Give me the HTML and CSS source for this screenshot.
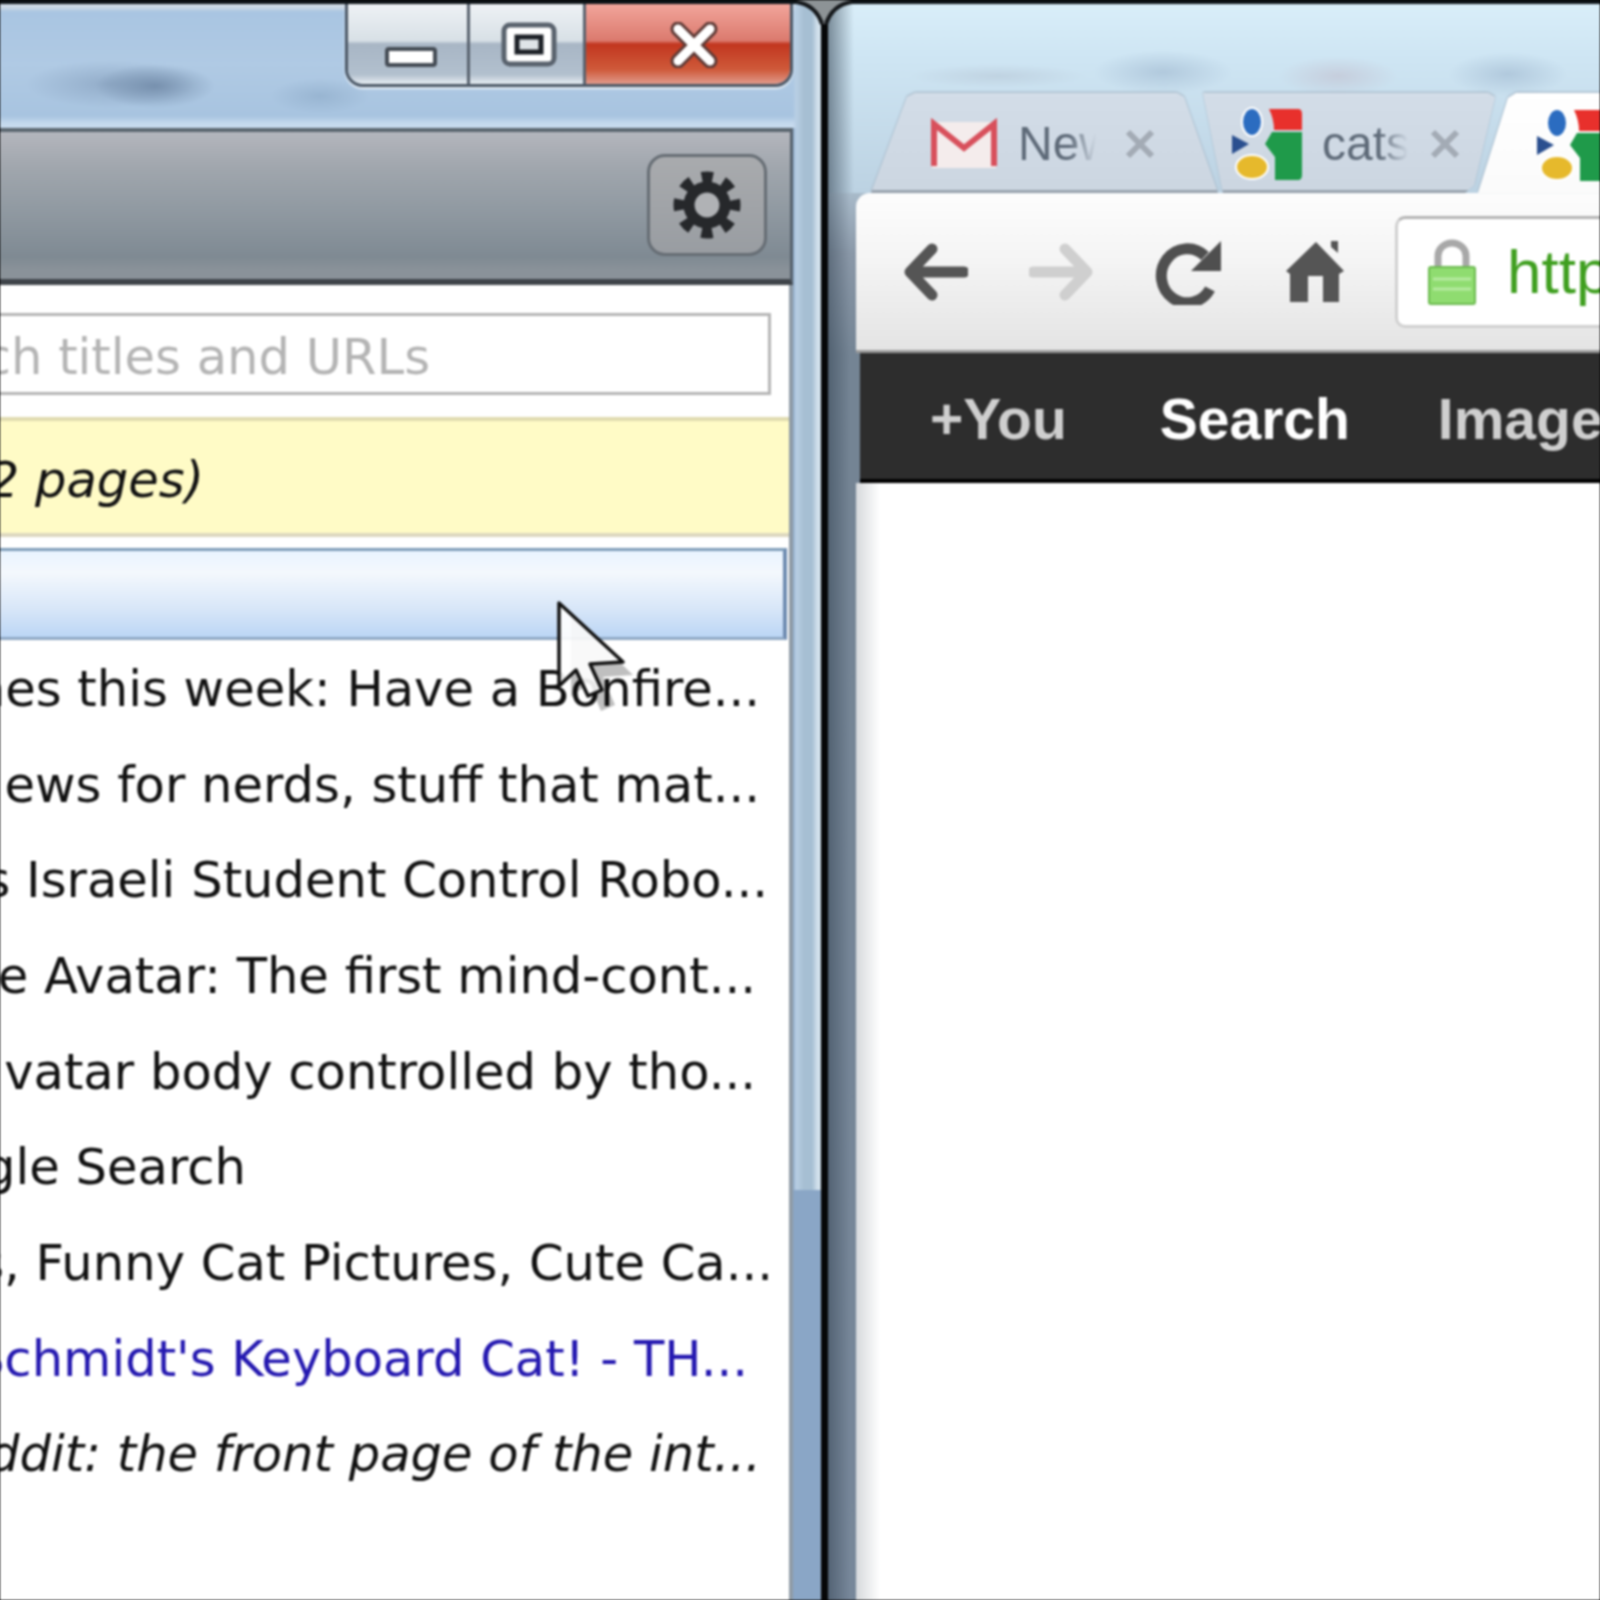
FILE: index.html
```html
<!DOCTYPE html>
<html lang="en">
<head>
<meta charset="utf-8">
<title>Tabs and browser</title>
<link rel="stylesheet" href="styles.css">
</head>
<body>
<div class="screen">
  <section class="left">
    <div class="titlebar">
      <div class="winbtns">
        <div class="wb wb-min"><svg width="60" height="30" viewBox="0 0 60 30"><rect x="6" y="7" width="48" height="16" rx="2" fill="#fff" stroke="#454c55" stroke-width="4"/></svg></div>
        <div class="wb wb-max"><svg width="60" height="46" viewBox="0 0 60 46"><rect x="5" y="3" width="50" height="39" rx="6" fill="#fff" stroke="#59626d" stroke-width="5"/><rect x="18" y="15" width="24" height="15" fill="#dfe4e8" stroke="#1c2026" stroke-width="5"/></svg></div>
        <div class="wb wb-close"><svg width="54" height="46" viewBox="0 0 54 46"><path d="M11 7 L43 39 M43 7 L11 39" stroke="#5e3a36" stroke-width="15" stroke-linecap="round"/><path d="M11 7 L43 39 M43 7 L11 39" stroke="#fff" stroke-width="9" stroke-linecap="round"/></svg></div>
      </div>
    </div>
    <div class="panel">
      <header class="panel-head">
        <button class="gear-btn" type="button" aria-label="Settings">
          <svg width="72" height="70" viewBox="0 0 72 70">
            <circle cx="36" cy="35" r="28" fill="none" stroke="#26282b" stroke-width="11" stroke-dasharray="11 11" stroke-dashoffset="5.5"/>
            <circle cx="36" cy="35" r="18" fill="none" stroke="#26282b" stroke-width="11"/>
            <circle cx="36" cy="35" r="12" fill="#b0b2b5"/>
          </svg>
        </button>
      </header>
      <div class="search-wrap"><div class="search"><span>Search titles and URLs</span></div></div>
      <div class="notice"><em>(2 pages)</em></div>
      <div class="selected"></div>
      <ul class="rows">
        <li class="row r1"><span>nes this week: Have a Bonfire...</span></li>
        <li class="row r2"><span>News for nerds, stuff that mat...</span></li>
        <li class="row r3"><span>This Israeli Student Control Robo...</span></li>
        <li class="row r4"><span>Life Avatar: The first mind-cont...</span></li>
        <li class="row r5"><span>avatar body controlled by tho...</span></li>
        <li class="row r6"><span>Google Search</span></li>
        <li class="row r7"><span>Cats, Funny Cat Pictures, Cute Ca...</span></li>
        <li class="row r8"><span>Schmidt's Keyboard Cat! - TH...</span></li>
        <li class="row r9"><span>reddit: the front page of the int...</span></li>
      </ul>
    </div>
  </section>
  <div class="sep"></div>
  <section class="chrome">
    <div class="tabstrip">
      <div class="tabs">
        <div class="tab tab1">
          <svg class="fav" width="72" height="52" viewBox="0 0 72 52"><rect x="4" y="4" width="64" height="46" fill="#f4ecec"/><path d="M6 48 V6 L36 30 L66 6 V48" fill="none" stroke="#d8505c" stroke-width="6"/></svg>
          <span class="tab-title t1">New</span>
          <svg class="tab-x x1" width="34" height="34" viewBox="0 0 34 34"><path d="M5 5 L29 29 M29 5 L5 29" stroke="#a3abb5" stroke-width="6"/></svg>
        </div>
        <div class="tab tab2">
          <svg class="fav" width="72" height="74" viewBox="0 0 72 74"><use href="#gbm"/></svg>
          <span class="tab-title t2">cats</span>
          <svg class="tab-x x2" width="34" height="34" viewBox="0 0 34 34"><path d="M5 5 L29 29 M29 5 L5 29" stroke="#a3abb5" stroke-width="6"/></svg>
        </div>
        <div class="tab tab3">
          <svg class="fav" width="72" height="74" viewBox="0 0 72 74"><use href="#gbm"/></svg>
        </div>
      </div>
    </div>
    <div class="toolbar">
      <svg class="tool t-back" width="66" height="58" viewBox="0 0 66 58"><path d="M30 6 L8 29 L30 52 M10 29 H62" fill="none" stroke="#555" stroke-width="11" stroke-linejoin="round" stroke-linecap="round"/></svg>
      <svg class="tool t-fwd" width="66" height="58" viewBox="0 0 66 58"><path d="M36 6 L58 29 L36 52 M4 29 H56" fill="none" stroke="#cfcfcf" stroke-width="11" stroke-linejoin="round" stroke-linecap="round"/></svg>
      <svg class="tool t-reload" width="68" height="66" viewBox="0 0 68 66"><path d="M50 17 A26 27 0 1 0 55 50" fill="none" stroke="#4f4f4f" stroke-width="11"/><path d="M66 2 V32 H36 Z" fill="#4f4f4f"/></svg>
      <svg class="tool t-home" width="60" height="66" viewBox="0 0 60 66"><path d="M31 3 L59 32 L54 35 V63 H38 V37 H23 V63 H5 V35 L1 32 Z M46 2 H53 V14 L46 8 Z" fill="#555"/></svg>
      <div class="omnibox">
        <svg class="lock" width="50" height="66" viewBox="0 0 50 66"><path d="M11 30 V17 A14 13 0 0 1 39 17 V30" fill="none" stroke="#a8a8a8" stroke-width="7"/><rect x="2" y="28" width="46" height="37" rx="2" fill="#8fdc70" stroke="#6cba50" stroke-width="2"/><path d="M6 40 H44 M6 50 H44" stroke="#b6eaa0" stroke-width="3"/></svg>
        <span class="url">https://</span>
      </div>
    </div>
    <nav class="gbar">
      <span class="g-dim">+You</span>
      <span class="g-on">Search</span>
      <span class="g-dim">Images</span>
    </nav>
    <div class="page"></div>
  </section>
  <svg class="junction" width="56" height="26" viewBox="0 0 56 26"><path d="M0 0 H56 C42 4 34 12 32 24 H24 C22 12 14 4 0 0 Z" fill="#8d9396"/><path d="M0 2 C14 4 22 12 26 24 M56 2 C42 4 34 12 30 24" fill="none" stroke="#15181b" stroke-width="4"/></svg>
  <svg class="cursor" width="84" height="120" viewBox="0 0 84 120">
    <path d="M8 6 V88 L26 74 L38 102 L52 96 L40 68 L70 66 Z" fill="#000" opacity=".25" transform="translate(7 9)"/>
    <path d="M3 3 V86 L20 70 L32 96 L46 90 L34 64 L67 62 Z" fill="#fff" fill-opacity=".9" stroke="#111" stroke-width="3.5" stroke-linejoin="round"/>
  </svg>
</div>
<svg class="defs" width="0" height="0">
  <defs>
    <g id="gbm">
      <path d="M40 25 L33 37 L43 50 V73 H66 Q70 73 70 68 V25 Z" fill="#1f9a4a"/>
      <path d="M37 2 H66 Q70 2 70 7 V23 H42 Q42 12 37 2 Z" fill="#e8302c"/>
      <ellipse cx="20" cy="15" rx="10" ry="14" fill="#2b6cc0" stroke="#fff" stroke-width="2"/>
      <path d="M0 28 L17 37 L0 47 Z" fill="#2a4f8f"/>
      <ellipse cx="20" cy="60" rx="16" ry="12" fill="#e6b92c" stroke="#fff" stroke-width="2"/>
    </g>
  </defs>
</svg>
</body>
</html>
```
FILE: styles.css
```css
* { box-sizing: border-box; }
html, body { margin: 0; padding: 0; background: #000; }
.screen {
  position: relative;
  display: flex;
  width: 1600px;
  height: 1600px;
  overflow: hidden;
  background: #0d1317;
  filter: blur(.8px);
}
.defs { position: absolute; }

/* left window */
.left {
  display: flex;
  flex-direction: column;
  width: 821px;
  margin-top: 4px;
  overflow: hidden;
  background:
    linear-gradient(90deg, transparent 793px, #b9cfe4 796px, #a6bfd3 804px, #a6bfd3 812px, #d6e4ee 818px, #c8d9e9 821px),
    linear-gradient(180deg, #cdd9e4 0, #cdd9e4 3px, #a9c5e2 8px, #b0cae4 60px, #a8c4e0 112px, #c6daee 120px, #c6daee 124px);
  background-size: 100% 1186px, 100% 124px;
  background-repeat: no-repeat;
  background-color: #8aa6c6;
}
.titlebar {
  display: flex;
  justify-content: flex-end;
  flex: none;
  height: 124px;
  padding-right: 28px;
  background:
    radial-gradient(ellipse 60px 22px at 155px 82px, rgba(105,130,160,.75), transparent),
    radial-gradient(ellipse 85px 24px at 110px 80px, rgba(120,145,175,.5), transparent),
    radial-gradient(ellipse 50px 18px at 320px 92px, rgba(130,160,190,.45), transparent);
}
.winbtns {
  display: flex;
  height: 83px;
  border: 3px solid #4c5866;
  border-top: 0;
  border-radius: 0 0 18px 18px;
  overflow: hidden;
  box-shadow: 0 2px 2px rgba(255,255,255,.75);
}
.wb {
  display: flex;
  justify-content: center;
  align-items: flex-start;
  height: 100%;
}
.wb-min {
  width: 122px;
  padding: 38px 0 0 6px;
  background: linear-gradient(180deg, #eef2f5 0, #d8e0e6 46%, #a8b6c5 50%, #b2c0ce 88%, #e6ecf1 100%);
  border-right: 3px solid #58626e;
}
.wb-max {
  width: 116px;
  padding: 18px 0 0 4px;
  background: linear-gradient(180deg, #eef2f5 0, #d8e0e6 46%, #a8b6c5 50%, #b2c0ce 88%, #e6ecf1 100%);
  border-right: 3px solid #58626e;
}
.wb-close {
  flex: 1;
  width: 204px;
  padding: 18px 0 0 11px;
  background: linear-gradient(180deg, #f2a59b 0, #db7a6e 46%, #c2361f 50%, #cf5a3a 82%, #e09a8c 100%);
}
.panel {
  display: flex;
  flex-direction: column;
  flex: 1;
  width: 793px;
  background: #fff;
  border-right: 4px solid #8f9ba6;
  font-family: "DejaVu Sans", sans-serif;
}
.panel-head {
  display: flex;
  justify-content: flex-end;
  align-items: flex-start;
  flex: none;
  height: 157px;
  margin-right: -4px;
  padding: 22px 23px 0 0;
  background: linear-gradient(180deg, #b4b6bd 0, #a0a6ad 25%, #929ba3 50%, #7f8a93 85%, #8a9299 94%);
  border-top: 4px solid #5b6670;
  border-right: 3px solid #56616c;
  border-bottom: 6px solid #3f444a;
}
.gear-btn {
  display: flex;
  justify-content: center;
  align-items: center;
  width: 120px;
  height: 102px;
  padding: 0;
  background: linear-gradient(180deg, #a9abae, #999da2);
  border: 3px solid #666d74;
  border-radius: 18px;
}
.search-wrap { flex: none; padding: 28px 18px 22px 0; }
.search {
  display: flex;
  justify-content: flex-end;
  align-items: center;
  height: 82px;
  padding: 5px 338px 0 0;
  border: 3px solid #b5b5b5;
  border-left: 0;
  color: #b4b4b4;
  font-size: 49.6px;
  white-space: nowrap;
}
.notice {
  display: flex;
  justify-content: flex-end;
  align-items: center;
  flex: none;
  height: 120px;
  padding: 5px 585px 0 0;
  background: #fffbc6;
  border-top: 4px solid #e0dbb0;
  border-bottom: 4px solid #ddd8c0;
  color: #111;
  font-size: 49.6px;
  white-space: nowrap;
}
.selected {
  position: relative;
  flex: none;
  height: 92px;
  margin: 11px 2px 0 0;
  background: linear-gradient(180deg, #e9f4ff 0, #f4f8fd 25%, #d6e5f8 70%, #bcd6f5 100%);
  border-top: 3px solid #7f9db9;
  border-right: 4px solid #6e8bb0;
  border-bottom: 3px solid #8fa8c4;
}
.rows { flex: 1; margin: 0; padding: 0; list-style: none; }
.row {
  display: flex;
  justify-content: flex-end;
  align-items: center;
  height: 95.7px;
  padding-top: 2px;
  color: #111;
  font-size: 49.6px;
  white-space: nowrap;
}
.row span, .notice em, .search span { flex: none; }
.r1 { padding-right: 29px; }
.r2 { padding-right: 29px; }
.r3 { padding-right: 21px; }
.r4 { padding-right: 33px; }
.r5 { padding-right: 33px; }
.r6 { padding-right: 543px; }
.r7 { padding-right: 16px; }
.r8 { padding-right: 41px; color: #2418b0; }
.r9 { padding-right: 28px; font-style: italic; }

.sep { flex: none; width: 7px; background: #060708; }

/* browser window */
.chrome {
  display: flex;
  flex-direction: column;
  flex: none;
  width: 772px;
  margin-top: 4px;
  padding-left: 28px;
  overflow: hidden;
  background:
    linear-gradient(90deg, rgba(30,45,60,.4) 0, rgba(255,255,255,0) 22px),
    linear-gradient(180deg, #d9eef9 0, #bcd0df 150px, #8a98a8 250px, #748494 350px, #77879a 1600px);
}
.tabstrip {
  display: flex;
  align-items: flex-end;
  flex: none;
  height: 189px;
  margin-left: -28px;
  padding-left: 43px;
  background:
    radial-gradient(ellipse 70px 22px at 335px 68px, rgba(150,175,200,.5), transparent),
    radial-gradient(ellipse 60px 20px at 510px 72px, rgba(190,180,195,.45), transparent),
    radial-gradient(ellipse 60px 22px at 680px 70px, rgba(150,175,200,.5), transparent),
    radial-gradient(ellipse 90px 12px at 170px 72px, rgba(180,195,210,.5), transparent),
    linear-gradient(90deg, rgba(30,45,60,.5) 0, rgba(255,255,255,0) 26px),
    linear-gradient(180deg, #d9eef9 0, #cfe6f4 50px, #bcd2e2 189px);
}
.tabs {
  display: flex;
  align-items: stretch;
  height: 100px;
  filter: drop-shadow(0 -1px 1px #a3b2c1);
}
.tab {
  display: flex;
  align-items: center;
  flex: none;
  height: 100%;
  padding-top: 4px;
  background: linear-gradient(180deg, #d3dde8, #ccd6e1);
  border-bottom: 3px solid #98a3ae;
}
.tab1 {
  width: 347px;
  padding-left: 57px;
  clip-path: polygon(0 100%, 36px 4px, 44px 0, 306px 0, 313px 4px, 100% 100%);
}
.tab2 {
  width: 292px;
  margin-left: -15px;
  padding-left: 29px;
  clip-path: polygon(0 0, 285px 0, 292px 4px, 271px 92%, 262px 100%, 20px 100%);
}
.tab3 {
  width: 122px;
  margin-left: -17px;
  padding-left: 59px;
  background: linear-gradient(180deg, #fff, #fbfbfb);
  border-bottom: 0;
  clip-path: polygon(0 100%, 30px 5px, 38px 0, 100% 0, 100% 100%);
}
.fav { flex: none; display: block; }
.tab-title {
  flex: none;
  overflow: hidden;
  margin-left: 18px;
  color: #5e6a78;
  font-family: "Liberation Sans", sans-serif;
  font-size: 48px;
  white-space: nowrap;
  -webkit-mask-image: linear-gradient(90deg, #000 65%, transparent);
  mask-image: linear-gradient(90deg, #000 65%, transparent);
}
.t1 { width: 78px; }
.t2 { width: 86px; }
.tab-x { flex: none; }
.x1 { margin-left: 27px; }
.x2 { margin-left: 20px; }

.toolbar {
  display: flex;
  align-items: center;
  flex: none;
  height: 160px;
  padding-left: 46px;
  background: linear-gradient(180deg, #fdfdfd 0, #f5f5f5 40%, #e4e4e4 100%);
  border-top-left-radius: 14px;
  border-bottom: 3px solid #9b9b9b;
}
.tool { flex: none; display: block; }
.t-fwd { margin-left: 61px; }
.t-reload { margin-left: 60px; }
.t-home { margin-left: 62px; }
.omnibox {
  display: flex;
  align-items: center;
  flex: 1;
  height: 112px;
  margin-left: 50px;
  padding-left: 29px;
  overflow: hidden;
  background: #fff;
  border: 3px solid #d0d0d0;
  border-top-color: #b4b4b4;
  border-right: 0;
  border-radius: 10px 0 0 10px;
}
.lock { flex: none; }
.url {
  flex: none;
  margin-left: 30px;
  color: #3f9f1f;
  font-family: "Liberation Sans", sans-serif;
  font-size: 62px;
  white-space: nowrap;
}
.gbar {
  display: flex;
  align-items: center;
  gap: 88px;
  flex: none;
  height: 130px;
  margin-left: 4px;
  padding: 6px 0 0 70px;
  overflow: hidden;
  background: #2d2d2d;
  border-bottom: 4px solid #000;
  font-family: "Liberation Sans", sans-serif;
  font-size: 57px;
  font-weight: 700;
  white-space: nowrap;
}
.g-dim { color: #cfcfcf; }
.g-on { margin-left: 5px; color: #fff; }
.page {
  flex: 1;
  background: linear-gradient(90deg, #d6d9dc 0, #fff 24px);
}
.junction { position: absolute; left: 796px; top: 0; }
.cursor { position: absolute; left: 556px; top: 600px; }
```
